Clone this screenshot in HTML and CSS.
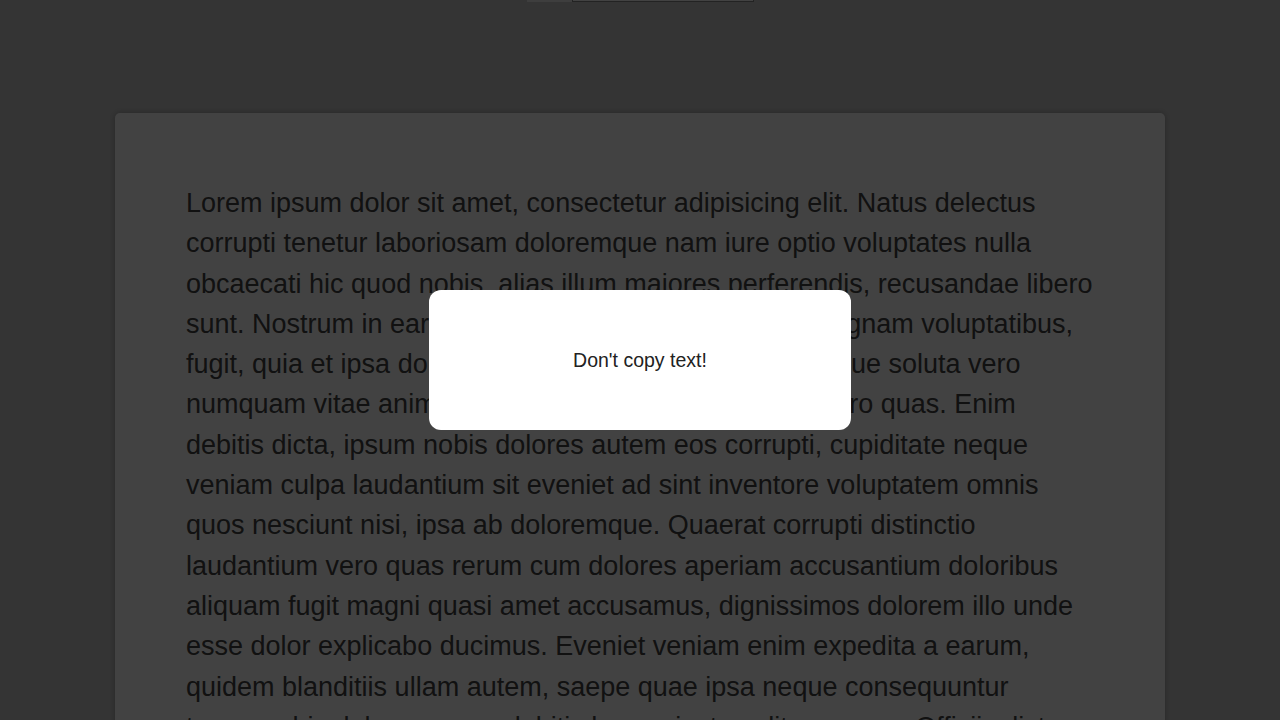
FILE: index.html
```html
<!DOCTYPE html>
<html lang="en">
<head>
<meta charset="utf-8">
<title>Don't copy text</title>
<link rel="stylesheet" href="styles.css">
</head>
<body>
<div class="topbar">
  <span class="tab tab-gray"></span>
  <span class="tab tab-white"></span>
</div>
<main class="card">
  <p class="text">Lorem ipsum dolor sit amet, consectetur adipisicing elit. Natus delectus corrupti tenetur laboriosam doloremque nam iure optio voluptates nulla obcaecati hic quod nobis, alias illum maiores perferendis, recusandae libero sunt. Nostrum in earum quisquam eveniet, vero illo, magnam voluptatibus, fugit, quia et ipsa doloribus sapiente excepturi nobis atque soluta vero numquam vitae animi illum temporibus, accusantium vero quas. Enim debitis dicta, ipsum nobis dolores autem eos corrupti, cupiditate neque veniam culpa laudantium sit eveniet ad sint inventore voluptatem omnis quos nesciunt nisi, ipsa ab doloremque. Quaerat corrupti distinctio laudantium vero quas rerum cum dolores aperiam accusantium doloribus aliquam fugit magni quasi amet accusamus, dignissimos dolorem illo unde esse dolor explicabo ducimus. Eveniet veniam enim expedita a earum, quidem blanditiis ullam autem, saepe quae ipsa neque consequuntur tempora hic dolorem quos debitis harum iusto velit magnam. Officiis dicta laboriosam nemo, quibusdam obcaecati rerum minima fugiat.</p>
</main>
<div class="overlay">
  <div class="modal">
    <p class="modal-text">Don't copy text!</p>
  </div>
</div>
</body>
</html>
```
FILE: styles.css
```css
html, body {
  margin: 0;
  padding: 0;
}
body {
  background: #c9c9c9;
  font-family: "Liberation Sans", Arial, sans-serif;
  overflow: hidden;
  height: 720px;
}
.topbar {
  display: flex;
  justify-content: center;
  height: 2px;
}
.tab {
  display: block;
  height: 2px;
}
.tab-gray {
  width: 45px;
  background: #eeeeee;
}
.tab-white {
  width: 182px;
  background: #ffffff;
  box-sizing: border-box;
  border: 1px solid #888;
  border-top: none;
}
.card {
  display: block;
  width: 1050px;
  margin: 111px auto 0;
  box-sizing: border-box;
  padding: 70px 70px 70px 71px;
  background: #ffffff;
  border-radius: 5px;
  box-shadow: 0 0 6px rgba(0, 0, 0, 0.25);
}
.text {
  margin: 0;
  font-size: 27px;
  line-height: 40.3px;
  color: #444444;
}
.overlay {
  position: fixed;
  inset: 0;
  background: rgba(0, 0, 0, 0.741);
  display: flex;
  align-items: center;
  justify-content: center;
}
.modal {
  width: 422px;
  height: 140px;
  background: #ffffff;
  border-radius: 12px;
  display: flex;
  align-items: center;
  justify-content: center;
}
.modal-text {
  margin: 0;
  font-size: 19.5px;
  color: #222222;
}
```
